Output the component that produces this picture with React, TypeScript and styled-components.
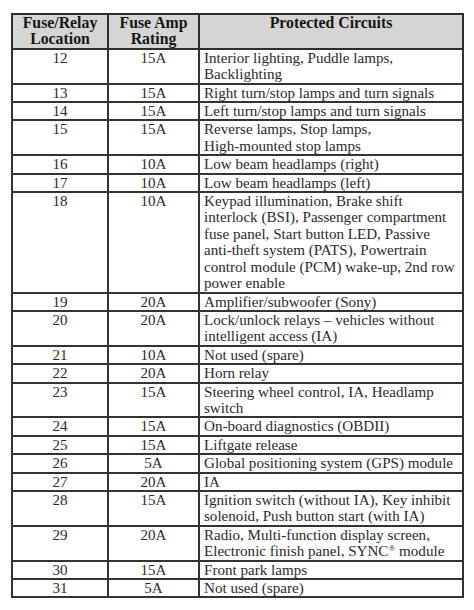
import React from "react";
import styled, { createGlobalStyle } from "styled-components";

const GlobalStyle = createGlobalStyle`
  html, body {
    margin: 0;
    padding: 0;
    background: #ffffff;
  }
`;

const Page = styled.div`
  padding: 13px 0 0 11px;
`;

const FuseTable = styled.table`
  width: 451px;
  border-collapse: collapse;
  table-layout: fixed;
  border: 2px solid #2e2e2e;
  font-family: "Liberation Serif", "Times New Roman", serif;
  font-size: 15.1px;
  line-height: 16.4px;
  color: #2a2a2a;
`;

const Col = styled.col<{ $width: number }>`
  width: ${(p) => p.$width}px;
`;

const HeadCell = styled.th`
  background: #d5d5d5;
  color: #161616;
  font-size: 15.8px;
  font-weight: 700;
  text-align: center;
  vertical-align: top;
  padding: 0;
  border: 2px solid #2e2e2e;
`;

const Cell = styled.td<{ $align?: "left" | "center" }>`
  text-align: ${(p) => p.$align ?? "center"};
  vertical-align: top;
  padding: ${(p) => (p.$align === "left" ? "0 0 0 4px" : "0")};
  border: 2px solid #333333;
  white-space: nowrap;
`;

const Mark = styled.sup`
  font-size: 9px;
  line-height: 0;
  vertical-align: 5px;
`;

type Row = { loc: number; amp: string; lines: React.ReactNode[] };

const rows: Row[] = [
  { loc: 12, amp: "15A", lines: ["Interior lighting, Puddle lamps,", "Backlighting"] },
  { loc: 13, amp: "15A", lines: ["Right turn/stop lamps and turn signals"] },
  { loc: 14, amp: "15A", lines: ["Left turn/stop lamps and turn signals"] },
  { loc: 15, amp: "15A", lines: ["Reverse lamps, Stop lamps,", "High-mounted stop lamps"] },
  { loc: 16, amp: "10A", lines: ["Low beam headlamps (right)"] },
  { loc: 17, amp: "10A", lines: ["Low beam headlamps (left)"] },
  {
    loc: 18,
    amp: "10A",
    lines: [
      "Keypad illumination, Brake shift",
      "interlock (BSI), Passenger compartment",
      "fuse panel, Start button LED, Passive",
      "anti-theft system (PATS), Powertrain",
      "control module (PCM) wake-up, 2nd row",
      "power enable",
    ],
  },
  { loc: 19, amp: "20A", lines: ["Amplifier/subwoofer (Sony)"] },
  { loc: 20, amp: "20A", lines: ["Lock/unlock relays \u2013 vehicles without", "intelligent access (IA)"] },
  { loc: 21, amp: "10A", lines: ["Not used (spare)"] },
  { loc: 22, amp: "20A", lines: ["Horn relay"] },
  { loc: 23, amp: "15A", lines: ["Steering wheel control, IA, Headlamp", "switch"] },
  { loc: 24, amp: "15A", lines: ["On-board diagnostics (OBDII)"] },
  { loc: 25, amp: "15A", lines: ["Liftgate release"] },
  { loc: 26, amp: "5A", lines: ["Global positioning system (GPS) module"] },
  { loc: 27, amp: "20A", lines: ["IA"] },
  { loc: 28, amp: "15A", lines: ["Ignition switch (without IA), Key inhibit", "solenoid, Push button start (with IA)"] },
  {
    loc: 29,
    amp: "20A",
    lines: [
      "Radio, Multi-function display screen,",
      <>
        Electronic finish panel, SYNC<Mark>®</Mark> module
      </>,
    ],
  },
  { loc: 30, amp: "15A", lines: ["Front park lamps"] },
  { loc: 31, amp: "5A", lines: ["Not used (spare)"] },
];

export default function App() {
  return (
    <Page>
      <GlobalStyle />
      <FuseTable>
        <colgroup>
          <Col $width={96} />
          <Col $width={91} />
          <Col $width={264} />
        </colgroup>
        <thead>
          <tr>
            <HeadCell>
              Fuse/Relay
              <br />
              Location
            </HeadCell>
            <HeadCell>
              Fuse Amp
              <br />
              Rating
            </HeadCell>
            <HeadCell>Protected Circuits</HeadCell>
          </tr>
        </thead>
        <tbody>
          {rows.map((row) => (
            <tr key={row.loc}>
              <Cell>{row.loc}</Cell>
              <Cell>{row.amp}</Cell>
              <Cell $align="left">
                {row.lines.map((line, i) => (
                  <React.Fragment key={i}>
                    {i > 0 && <br />}
                    {line}
                  </React.Fragment>
                ))}
              </Cell>
            </tr>
          ))}
        </tbody>
      </FuseTable>
    </Page>
  );
}
